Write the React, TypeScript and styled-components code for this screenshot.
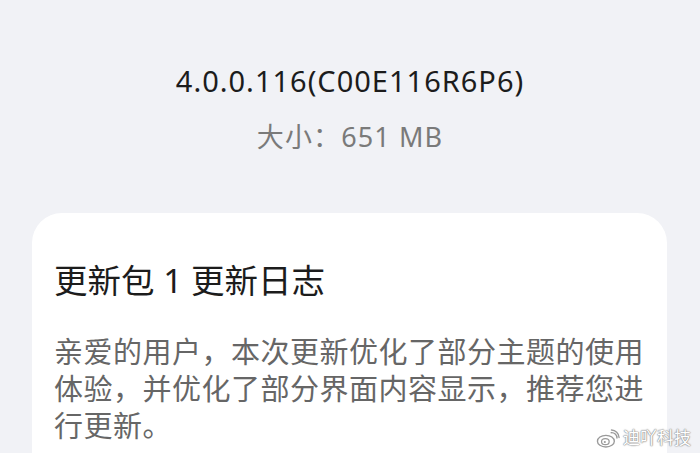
import React from 'react';
import styled, { createGlobalStyle } from 'styled-components';

const GlobalStyle = createGlobalStyle`
  html, body {
    margin: 0;
    padding: 0;
    background: #f1f2f6;
  }
  body {
    font-family: "Noto Sans", "Noto Sans CJK SC", sans-serif;
  }
`;

function WeiboLogo() {
  return (
    <svg width="24" height="19" viewBox="0 0 22 18">
      <ellipse cx="9" cy="11.5" rx="8" ry="5.5" fill="#fff" stroke="#9a9a9a" strokeWidth="1.3" />
      <ellipse cx="8.5" cy="12" rx="3.6" ry="2.8" fill="none" stroke="#9a9a9a" strokeWidth="1.2" />
      <circle cx="8" cy="12.3" r="1" fill="#9a9a9a" />
      <path d="M14 3.5 A5 5 0 0 1 19.5 8.5" fill="none" stroke="#9a9a9a" strokeWidth="1.3" strokeLinecap="round" />
      <path d="M14.3 1 A7.5 7.5 0 0 1 21.5 8" fill="none" stroke="#9a9a9a" strokeWidth="1.3" strokeLinecap="round" />
    </svg>
  );
}

export default function App() {
  return (
    <>
      <GlobalStyle />
      <Screen>
        <Header>
          <Version>4.0.0.116(C00E116R6P6)</Version>
          <Size>大小：651 MB</Size>
        </Header>
        <Card>
          <CardTitle>更新包 1 更新日志</CardTitle>
          <CardBody>
            亲爱的用户，本次更新优化了部分主题的使用体验，并优化了部分界面内容显示，推荐您进行更新。
          </CardBody>
        </Card>
        <Watermark>
          <WeiboLogo />
          <span>迪吖科技</span>
        </Watermark>
      </Screen>
    </>
  );
}

const Screen = styled.div`
  position: relative;
  width: 700px;
  height: 453px;
  overflow: hidden;
  background: #f1f2f6;
`;

const Header = styled.div`
  display: flex;
  flex-direction: column;
  align-items: center;
  padding-top: 62px;
  gap: 19px;
`;

const Version = styled.div`
  font-size: 29px;
  line-height: 38px;
  color: #1c1c1c;
  letter-spacing: 1px;
`;

const Size = styled.div`
  font-size: 27px;
  line-height: 36px;
  color: #7a7a7a;
  letter-spacing: 1.1px;
`;

const Card = styled.div`
  margin: 58px 33px 0 32px;
  background: #ffffff;
  border-radius: 30px;
  padding: 45px 16px 40px 22px;
  height: 400px;
`;

const CardTitle = styled.div`
  font-size: 33.5px;
  line-height: 44px;
  color: #1c1c1c;
`;

const CardBody = styled.p`
  margin: 31px 0 0;
  font-size: 29px;
  letter-spacing: 0.5px;
  line-height: 37px;
  color: #666666;
`;

const Watermark = styled.div`
  position: absolute;
  right: 9px;
  bottom: 4px;
  display: flex;
  align-items: center;
  gap: 3px;
  font-size: 17px;
  line-height: 22px;
  color: #ffffff;
  text-shadow: 0 0 1px #8a8a8a, 0 0 1px #8a8a8a, 0 0 2px #9a9a9a;
`;
